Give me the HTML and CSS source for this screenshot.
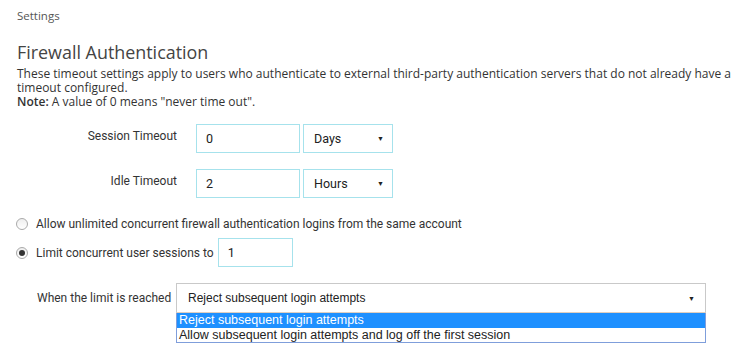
FILE: index.html
```html
<!DOCTYPE html>
<html>
<head>
<meta charset="utf-8">
<link rel="stylesheet" href="styles.css">
</head>
<body>
<div class="page">
  <div class="crumb">Settings</div>
  <h1 class="title">Firewall Authentication</h1>
  <p class="desc">These timeout settings apply to users who authenticate to external third-party authentication servers that do not already have a timeout configured.<br><b>Note:</b> A value of 0 means "never time out".</p>

  <div class="row">
    <div class="label">Session Timeout</div>
    <div class="field input">0</div>
    <div class="field select">Days<span class="caret">&#9660;</span></div>
  </div>
  <div class="row">
    <div class="label">Idle Timeout</div>
    <div class="field input">2</div>
    <div class="field select">Hours<span class="caret">&#9660;</span></div>
  </div>

  <div class="radio-row first">
    <span class="radio"></span>
    <span class="rlabel">Allow unlimited concurrent firewall authentication logins from the same account</span>
  </div>
  <div class="radio-row">
    <span class="radio checked"></span>
    <span class="rlabel">Limit concurrent user sessions to</span>
    <div class="field input small">1</div>
  </div>

  <div class="limit-row">
    <div class="llabel">When the limit is reached</div>
    <div class="dd">
      <div class="dd-box">Reject subsequent login attempts<span class="caret">&#9660;</span></div>
      <div class="dd-list">
        <div class="opt sel">Reject subsequent login attempts</div>
        <div class="opt">Allow subsequent login attempts and log off the first session</div>
      </div>
    </div>
  </div>
</div>
</body>
</html>
```

FILE: styles.css
```css
html, body { margin: 0; padding: 0; background: #fff; }
.page { padding: 9px 0 0 17px; color: #333; }
.crumb { font-family: "Open Sans", sans-serif; font-size: 11.5px; color: #555; line-height: 14px; }
.title { font-family: "Open Sans", sans-serif; font-weight: 400; font-size: 17.9px; color: #444; margin: 17px 0 0 0; line-height: 24px; }
.desc { font-family: "Open Sans", sans-serif; font-size: 12px; color: #333; margin: 3px 0 0 0; line-height: 14px; padding-right: 4px; }
.desc b { font-weight: 600; }
.row { display: flex; align-items: center; margin-top: 15px; height: 29px; }
.row + .row { margin-top: 16px; }
.label { width: 160px; text-align: right; font-family: Roboto, sans-serif; font-size: 12px; color: #333; margin-right: 19px; position: relative; top: -3px; }
.field { box-sizing: border-box; height: 29px; border: 1px solid #a6e2ec; font-family: Roboto, sans-serif; font-size: 12.5px; color: #222; display: flex; align-items: center; padding-left: 9px; }
.input { width: 104px; }
.select { width: 90px; margin-left: 3px; padding-left: 10px; justify-content: space-between; padding-right: 8px; }
.caret { font-size: 7px; color: #222; }
.radio-row { display: flex; align-items: center; height: 29px; font-family: Roboto, sans-serif; font-size: 12px; color: #333; }
.radio-row.first { margin-top: 16px; height: 20px; }
.radio-row + .radio-row { margin-top: 4px; }
.radio { box-sizing: border-box; width: 12px; height: 12px; border-radius: 50%; border: 1px solid #aaa; background: linear-gradient(#eee, #fff); margin-left: -1px; margin-right: 8px; position: relative; }
.radio.checked::after { content: ""; position: absolute; left: 2px; top: 2px; width: 6px; height: 6px; border-radius: 50%; background: #333; }
.small { width: 75px; margin-left: 4px; }
.limit-row { display: flex; align-items: flex-start; margin-top: 16px; margin-left: 20px; }
.llabel { font-family: Roboto, sans-serif; font-size: 12px; color: #333; margin-top: 8px; width: 139px; }
.dd { width: 530px; }
.dd-box { box-sizing: border-box; height: 30px; border: 1px solid #c9c9c9; border-bottom-color: #e0cfc0; display: flex; align-items: center; justify-content: space-between; padding: 0 10px 0 11px; font-family: "Liberation Sans", Arial, sans-serif; font-size: 12px; color: #222; }
.dd-list { border: 1px solid #7f9edb; border-top: none; font-family: "Liberation Sans", Arial, sans-serif; font-size: 12.5px; color: #222; }
.opt { height: 14.5px; line-height: 14.5px; padding-left: 2px; }
.opt.sel { background: #1e90ff; color: #fff; }
```
